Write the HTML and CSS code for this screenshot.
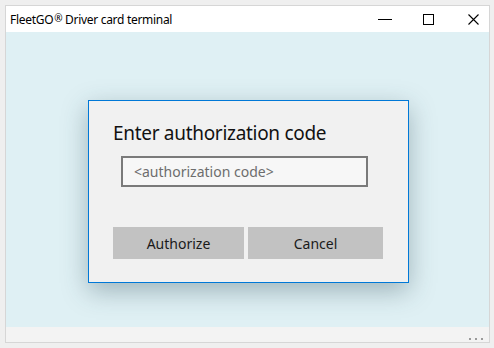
FILE: index.html
```html
<!DOCTYPE html>
<html lang="en">
<head>
    <meta charset="UTF-8">
    <title>FleetGO Driver card terminal</title>
    <link rel="stylesheet" href="styles.css">
</head>
<body>
    <div class="window">
        <div class="titlebar">
            <span class="title">FleetGO<sup class="reg">®</sup> Driver card terminal</span>
            <div class="controls">
                <span class="ctl min">
                    <svg width="14" height="14" viewBox="0 0 14 14"><path d="M0 7.5h14" stroke="#000" stroke-width="1"/></svg>
                </span>
                <span class="ctl max">
                    <svg width="11" height="11" viewBox="0 0 11 11"><rect x="0.5" y="0.5" width="10" height="10" fill="none" stroke="#000" stroke-width="1"/></svg>
                </span>
                <span class="ctl close">
                    <svg width="11" height="11" viewBox="0 0 11 11"><path d="M0.5 0.5l10 10M10.5 0.5l-10 10" stroke="#000" stroke-width="1.1"/></svg>
                </span>
            </div>
        </div>
        <div class="content">
            <div class="dialog">
                <h1 class="heading">Enter authorization code</h1>
                <input type="text" class="code" placeholder="&lt;authorization code&gt;">
                <div class="buttons">
                    <button class="button wide-a">Authorize</button>
                    <button class="button wide-b">Cancel</button>
                </div>
            </div>
        </div>
        <div class="statusbar">
            <span class="grip"><i></i><i></i><i></i></span>
        </div>
    </div>
</body>
</html>
```

FILE: styles.css
```css
body {
    margin: 0;
    background-color: #efefef;
    font-family: "Noto Sans", "Open Sans", sans-serif;
    height: 348px;
    overflow: hidden;
}
.window {
    margin: 5px 0 0 5px;
    width: 483px;
    height: 336px;
    border: 1px solid #d6d6d6;
    display: flex;
    flex-direction: column;
    background-color: #fff;
}
.titlebar {
    height: 26px;
    display: flex;
    align-items: center;
    justify-content: space-between;
    background-color: #fff;
}
.title {
    font-size: 12px;
    color: #000;
    padding-left: 4px;
    letter-spacing: -0.3px;
}
.reg {
    font-size: 10px;
    vertical-align: 2px;
    margin-left: 1px;
}
.controls {
    display: flex;
    height: 100%;
}
.ctl {
    width: 45px;
    display: flex;
    align-items: center;
    justify-content: flex-end;
}
.min svg {
    margin-right: 7px;
}
.max svg {
    margin-right: 10px;
}
.close svg {
    margin-right: 10px;
}
.content {
    flex: 1;
    background-color: #dff0f4;
    padding: 68px 0 0 82px;
}
.dialog {
    width: 321px;
    height: 183px;
    border: 1px solid #0078d7;
    background-color: #f1f1f1;
    box-shadow: 0 8px 24px rgba(40, 70, 80, 0.35);
    padding: 0 24px;
    box-sizing: border-box;
}
.heading {
    margin: 17px 0 0 0;
    font-size: 19px;
    font-weight: normal;
    color: #111;
    letter-spacing: -0.3px;
    line-height: 30px;
}
.code {
    display: block;
    margin: 8px 0 0 8px;
    width: 247px;
    height: 31px;
    box-sizing: border-box;
    border: 2px solid #7a7a7a;
    background-color: #f7f7f7;
    padding: 0 11px;
    font-family: "Noto Sans", "Open Sans", sans-serif;
    font-size: 14px;
    outline: none;
}
.code::placeholder {
    color: #6d6d6d;
}
.buttons {
    display: flex;
    gap: 4px;
    margin-top: 40px;
}
.button {
    height: 32px;
    border: none;
    background-color: #c2c2c2;
    font-family: "Noto Sans", "Open Sans", sans-serif;
    font-size: 14px;
    color: #1a1a1a;
    padding: 0;
}
.wide-a {
    width: 131px;
}
.wide-b {
    width: 135px;
}
.statusbar {
    height: 15px;
    background-color: #f3f3f3;
    display: flex;
    justify-content: flex-end;
    align-items: flex-end;
}
.grip {
    display: flex;
    gap: 4px;
    padding: 0 6px 2px 0;
}
.grip i {
    width: 2px;
    height: 2px;
    background-color: #9a9a9a;
}
```
